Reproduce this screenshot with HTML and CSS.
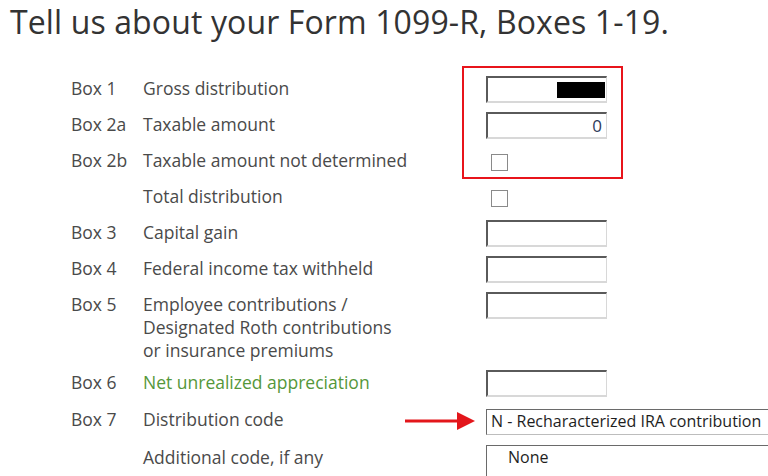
FILE: index.html
```html
<!DOCTYPE html>
<html>
<head>
<meta charset="utf-8">
<link rel="stylesheet" href="styles.css">
</head>
<body>
<h1 class="title">Tell us about your Form 1099-R, Boxes 1-19.</h1>
<div class="form">
  <div class="row">
    <span class="box">Box 1</span>
    <span class="desc">Gross distribution</span>
    <span class="field"><span class="input"><span class="redact"></span></span></span>
  </div>
  <div class="row">
    <span class="box">Box 2a</span>
    <span class="desc">Taxable amount</span>
    <span class="field"><span class="input"><span class="value">0</span></span></span>
  </div>
  <div class="row">
    <span class="box">Box 2b</span>
    <span class="desc">Taxable amount not determined</span>
    <span class="field"><span class="check"></span></span>
  </div>
  <div class="row">
    <span class="box"></span>
    <span class="desc">Total distribution</span>
    <span class="field"><span class="check"></span></span>
  </div>
  <div class="row">
    <span class="box">Box 3</span>
    <span class="desc">Capital gain</span>
    <span class="field"><span class="input"></span></span>
  </div>
  <div class="row">
    <span class="box">Box 4</span>
    <span class="desc">Federal income tax withheld</span>
    <span class="field"><span class="input"></span></span>
  </div>
  <div class="row row-tall">
    <span class="box">Box 5</span>
    <span class="desc">Employee contributions /<br>Designated Roth contributions<br>or insurance premiums</span>
    <span class="field"><span class="input"></span></span>
  </div>
  <div class="row row-37">
    <span class="box">Box 6</span>
    <span class="desc green">Net unrealized appreciation</span>
    <span class="field"><span class="input"></span></span>
  </div>
  <div class="row row-38">
    <span class="box">Box 7</span>
    <span class="desc desc-arrow">Distribution code
      <svg class="arrow" width="70" height="18" viewBox="0 0 70 18"><rect x="0" y="7.5" width="54" height="3" fill="#e3161b"/><polygon points="52,0 70,9 52,18" fill="#e3161b"/></svg>
    </span>
    <span class="field"><span class="select">N - Recharacterized IRA contribution</span></span>
  </div>
  <div class="row">
    <span class="box"></span>
    <span class="desc">Additional code, if any</span>
    <span class="field"><span class="select select-2">None</span></span>
  </div>
</div>
<div class="highlight"></div>
</body>
</html>
```
FILE: styles.css
```css
html, body {
  margin: 0;
  padding: 0;
  background: #fff;
  overflow: hidden;
}
body {
  width: 768px;
  height: 476px;
  position: relative;
  font-family: "Open Sans", "DejaVu Sans", sans-serif;
}
.title {
  margin: 0;
  padding-left: 10px;
  font-size: 32px;
  line-height: 44px;
  letter-spacing: 0.12px;
  font-weight: 400;
  color: #333;
  white-space: nowrap;
}
.form {
  margin-top: 27px;
  padding-left: 71px;
}
.row {
  display: grid;
  grid-template-columns: 72px 343px 1fr;
  height: 36px;
  color: #4a4a4a;
  font-size: 17.5px;
  line-height: 23px;
}
.row-tall { height: 78px; }
.row-37 { height: 37px; }
.row-38 { height: 38px; }
.box, .desc {
  padding-top: 6px;
  white-space: nowrap;
}
.green { color: #55973a; }
.desc-arrow {
  display: flex;
  align-items: flex-start;
}
.arrow {
  margin-left: auto;
  margin-right: 11px;
  margin-top: 4px;
}
.field {
  display: flex;
  align-items: flex-start;
  overflow: visible;
}
.input {
  margin-top: 5px;
  box-sizing: border-box;
  width: 121px;
  height: 27px;
  border-top: 2px solid #5a5a5a;
  border-left: 2px solid #5a5a5a;
  border-right: 1px solid #d8d8d8;
  border-bottom: 2px solid #d8d8d8;
  display: flex;
  align-items: center;
  justify-content: flex-end;
  padding-right: 1px;
}
.redact {
  width: 48px;
  height: 16px;
  background: #000;
}
.value {
  font-size: 17px;
  color: #2e3a5a;
  padding-right: 3px;
}
.check {
  margin-top: 11px;
  margin-left: 5px;
  box-sizing: border-box;
  width: 17px;
  height: 17px;
  border: 1px solid #8a8a8a;
  background: #fff;
}
.select {
  margin-top: 7px;
  box-sizing: border-box;
  width: 300px;
  height: 26px;
  border-top: 1px solid #6a6a6a;
  border-left: 1px solid #6a6a6a;
  border-bottom: 1px solid #bdbdbd;
  padding-left: 4px;
  font-size: 16px;
  line-height: 23px;
  color: #1e1e1e;
  white-space: nowrap;
}
.select-2 {
  margin-top: 5px;
  height: 40px;
  padding-left: 21px;
}
.highlight {
  position: absolute;
  left: 462px;
  top: 66px;
  width: 157px;
  height: 109px;
  border: 2px solid #e8141b;
}
```
